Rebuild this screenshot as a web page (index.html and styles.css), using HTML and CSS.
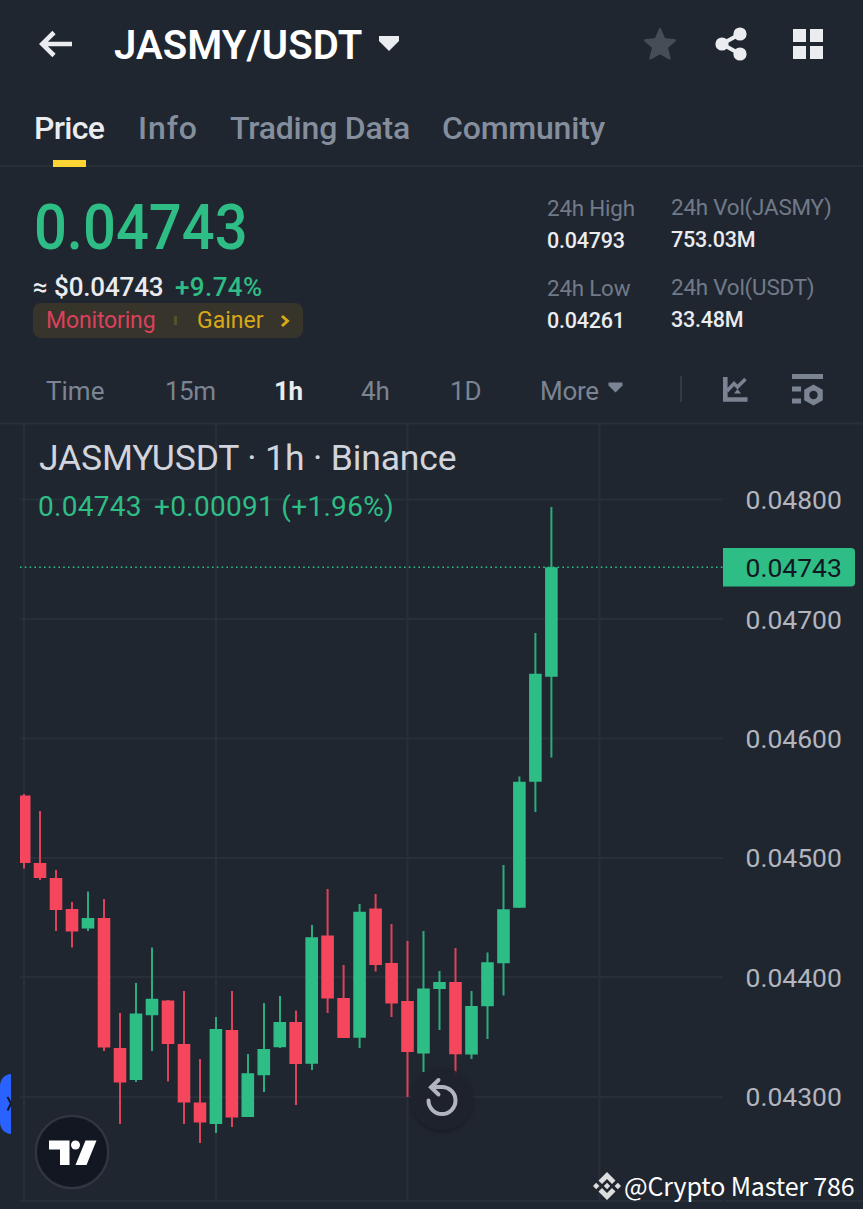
FILE: index.html
```html
<!DOCTYPE html>
<html lang="en">
<head>
<meta charset="utf-8">
<title>JASMY/USDT</title>
<link rel="stylesheet" href="styles.css">
</head>
<body>
<main class="app">
  <header class="topbar">
    <svg class="back" width="34" height="28" viewBox="0 0 34 28"><path d="M33 14H3M15 2.500L3.200 14 15 25.500" fill="none" stroke="#eaecef" stroke-width="4.600"/></svg>
    <h1 class="pair">JASMY/USDT</h1>
    <svg class="pair-caret" width="22" height="17" viewBox="0 0 22 17"><path d="M1 1H21V6L11 16 1 6Z" fill="#eaecef"/></svg>
    <div class="actions">
      <svg width="34" height="34" viewBox="0 0 34 34"><path d="M17 2L21.200 12 32 13.200 24 20.600 26.700 31.500 17 26.200 7.300 31.500 10 20.600 2 13.200 12.800 12Z" fill="#474d57" stroke="#474d57" stroke-width="2" stroke-linejoin="round"/></svg>
      <svg width="34" height="34" viewBox="0 0 34 34"><g fill="#eaecef"><circle cx="8" cy="17" r="6.600"/><circle cx="26" cy="7" r="6.600"/><circle cx="26" cy="27" r="6.600"/></g><path d="M26 7L8 17 26 27" fill="none" stroke="#eaecef" stroke-width="4"/></svg>
      <svg width="30" height="30" viewBox="0 0 30 30"><path d="M0 0H13V13H0ZM17 0H30V13H17ZM0 17H13V30H0ZM17 17H30V30H17Z" fill="#eaecef"/></svg>
    </div>
  </header>

  <nav class="tabs">
    <span class="tab active t-price">Price</span>
    <span class="tab t-info">Info</span>
    <span class="tab t-data">Trading Data</span>
    <span class="tab t-comm">Community</span>
  </nav>

  <section class="summary">
    <div class="quote">
      <div class="last">0.04743</div>
      <div class="fiat"><span class="usd">≈ $0.04743</span><span class="change">+9.74%</span></div>
      <div class="tags"><span class="monitoring">Monitoring</span><i class="tag-sep"></i><span class="gainer">Gainer</span><svg width="11" height="14" viewBox="0 0 11 14"><path d="M2 2L7.500 7 2 12" fill="none" stroke="#d9a816" stroke-width="3"/></svg></div>
    </div>
    <div class="stats left">
      <div class="stat"><span class="label">24h High</span><span class="value">0.04793</span></div>
      <div class="stat"><span class="label">24h Low</span><span class="value">0.04261</span></div>
    </div>
    <div class="stats right">
      <div class="stat"><span class="label">24h Vol(JASMY)</span><span class="value">753.03M</span></div>
      <div class="stat"><span class="label">24h Vol(USDT)</span><span class="value">33.48M</span></div>
    </div>
  </section>

  <div class="intervals">
    <span class="iv time">Time</span>
    <span class="iv m15">15m</span>
    <span class="iv h1 selected">1h</span>
    <span class="iv h4">4h</span>
    <span class="iv d1">1D</span>
    <span class="iv more">More</span>
    <svg class="more-caret" width="15" height="11" viewBox="0 0 15 11"><path d="M.5 .5H14.500V3.500L7.500 10.500 .5 3.500Z" fill="#7b8492"/></svg>
    <i class="rule"></i>
    <svg class="ind" width="25" height="25" viewBox="0 0 25 25"><path d="M2.300 0V22.500H24.500" fill="none" stroke="#7b8492" stroke-width="4.600"/><path d="M4 14L11 6.500 14.500 10 22.500 2" fill="none" stroke="#7b8492" stroke-width="3.500"/><path d="M14.500 12L18 16.500H11Z" fill="#7b8492"/></svg>
    <svg class="settings" width="31" height="32" viewBox="0 0 31 32"><path d="M0 0H31V5H0ZM0 12.500H9V17.500H0ZM0 24.500H9V29.500H0Z" fill="#7b8492"/><path fill-rule="evenodd" d="M21.500 10.500L30.800 15.800V26.200L21.500 31.500 12.200 26.200V15.800ZM21.500 16.800A4.200 4.200 0 1 0 21.500 25.200 4.200 4.200 0 1 0 21.500 16.800Z" fill="#7b8492"/></svg>
  </div>

  <section class="chart">
    <svg class="plot" width="863" height="787" viewBox="0 422 863 787">
      <path class="grid" d="M0 423.500H863M24 423V1201M216 423V1201M407.500 423V1201M599.500 423V1201M20 499.500H723M20 619H723M20 738.500H723M20 858H723M20 977H723M20 1097H723M20 1201H723M725 1201H863"/>
      <path class="wick down" d="M24 794V868.500M40 811V880M56 870V931M72 902V947.500M104 899V1051M120 1013V1124M168 1000V1081.500M184 991V1124M200 1059V1143M232 991V1127M296 1010.500V1105M327.600 889V1013M343.600 965V1038M375.600 894V971.500M391.500 924V1017M407.500 941V1097M455.500 948V1077"/>
      <path class="wick up" d="M88 891.500V931M136 983V1082M152 947.500V1051M216 1017V1133M248 1054V1117M264 1003V1092M280 996V1048M312 925V1070M359.600 904V1048M423.500 931V1072M439.500 971V1030M471.500 991V1059M487.500 952.500V1039M503.500 865V995.500M519.400 776.500V908M535.400 633V812M551.400 507V757.500"/>
      <path class="body down" d="M20 795.500H30.500V863H20ZM33.700 863h12.600v15h-12.600ZM49.700 878h12.600v32h-12.600ZM65.700 909h12.600v22.500h-12.600ZM97.700 918h12.600v129.500h-12.600ZM113.700 1048h12.600v34.500h-12.600ZM161.700 1000.500h12.600v43.500h-12.600ZM177.700 1044h12.600v58.500h-12.600ZM193.700 1102.500h12.600v20h-12.600ZM225.600 1030h12.600v87.500h-12.600ZM289.400 1022h12.600v42h-12.600ZM321.300 935.500h12.600v63h-12.600ZM337.300 998h12.600v40h-12.600ZM369.300 908.500h12.600v56.500h-12.600ZM385.300 963h12.600v40.500h-12.600ZM401.200 1001h12.600v51h-12.600ZM449.200 982h12.600v72.300h-12.600Z"/>
      <path class="body up" d="M81.700 918h12.600v10.500h-12.600ZM129.700 1013.500h12.600v66.500h-12.600ZM145.700 998.700h12.600v16.500h-12.600ZM209.600 1029h12.600v95h-12.600ZM241.500 1073.300h12.600v43.700h-12.600ZM257.500 1049h12.600v26.200h-12.600ZM273.500 1022h12.600v25.300h-12.600ZM305.400 937.300h12.600v126.500h-12.600ZM353.300 911.700h12.600v126h-12.600ZM417.200 988.500h12.600v65h-12.600ZM433.200 982h12.600v7h-12.600ZM465.200 1006h12.600v48.500h-12.600ZM481.200 962.300h12.600v44h-12.600ZM497.200 909.300h12.600v54h-12.600ZM513.100 781.700h12.600v126h-12.600ZM529.100 673.700h12.600v108h-12.600ZM545.100 567.300h12.600v109.500h-12.600Z"/>
      <path class="last-line" d="M20 567.200H723"/>
      <path d="M723 548H851a4 4 0 0 1 4 4V582.500a4 4 0 0 1-4 4H723Z" fill="#2ebd85"/>
      <g class="axis">
        <text x="745.500" y="508.600">0.04800</text>
        <text x="745.500" y="576.600" class="current">0.04743</text>
        <text x="745.500" y="628.500">0.04700</text>
        <text x="745.500" y="748.400">0.04600</text>
        <text x="745.500" y="867.400">0.04500</text>
        <text x="745.500" y="986.800">0.04400</text>
        <text x="745.500" y="1106.400">0.04300</text>
      </g>
    </svg>
    <div class="legend">
      <div class="legend-title">JASMYUSDT · 1h · Binance</div>
      <div class="legend-values"><span class="lv-price">0.04743</span><span class="lv-change">+0.00091 (+1.96%)</span></div>
    </div>
    <svg class="drawer" width="11" height="60" viewBox="0 0 11 60"><path d="M11 0C5 0 0 5 0 12V48C0 55 5 60 11 60Z" fill="#2962ff"/><path d="M7.500 23L11 29.500 7.500 36.500" fill="none" stroke="#131722" stroke-width="2"/></svg>
    <svg class="tv" width="76" height="76" viewBox="0 0 76 76"><circle cx="38" cy="38" r="36.200" fill="#131722" stroke="#323642" stroke-width="2.300"/><g fill="#fff"><path d="M15 26.500H35.500V51H26V35.500H15Z"/><circle cx="41.500" cy="31" r="4.500"/><path d="M51.500 26.500H62.500L52.500 51H41.500Z"/></g></svg>
    <div class="reset"><svg width="34" height="40" viewBox="0 0 34 40"><path d="M3.500 23.500A13.500 13.500 0 1 0 17 10H7M13.500 3L6 10.200 13.500 17.500" fill="none" stroke="#b2b5be" stroke-width="4" stroke-linecap="round"/></svg></div>
    <div class="watermark">
      <svg width="28" height="28" viewBox="0 0 28 28"><path d="M14 0L22.500 8.500 19 12 14 7 9 12 5.500 8.500ZM14 28L22.500 19.500 19 16 14 21 9 16 5.500 19.500ZM14 10.800L17.200 14 14 17.200 10.800 14ZM3.200 10.800L6.400 14 3.200 17.200 0 14ZM24.800 10.800L28 14 24.800 17.200 21.600 14Z" fill="#ddd"/></svg>
      <span>@Crypto Master 786</span>
    </div>
  </section>
</main>
</body>
</html>
```
FILE: styles.css
```css
* { box-sizing: border-box; }
body { margin: 0; background: #202630; font-family: Roboto, "Liberation Sans", sans-serif; }
.app { width: 863px; height: 1209px; overflow: hidden; color: #eaecef; }
svg { display: block; flex: none; }
span, .last, .legend-title { white-space: nowrap; }

.topbar { height: 87px; padding-left: 39px; display: flex; align-items: center; }
.back { margin-right: 41px; }
.pair { margin: 5px 0 0; width: 264px; font-size: 40px; line-height: 48px; font-weight: 600; letter-spacing: 0.1px; color: #fff; white-space: nowrap; }
.actions { display: flex; align-items: center; gap: 37px; margin-left: auto; padding-right: 40px; }
.actions svg:last-child { margin-left: 8px; }

.tabs { height: 80px; display: flex; padding: 21px 0 0 34px; border-bottom: 2px solid #282e38; }
.tab { position: relative; line-height: 41px; height: 59px; font-size: 32px; font-weight: 500; letter-spacing: -0.2px; color: #848e9c; }
.tab.active { color: #eaecef; letter-spacing: -0.7px; }
.tab.active::after { content: ""; position: absolute; left: 19px; bottom: 0; width: 33px; height: 7px; background: #fcd535; }
.t-price { width: 104px; }
.t-info { width: 92px; letter-spacing: 0.9px; }
.t-data { width: 212px; }

.summary { height: 191px; display: flex; padding: 28px 0 0 33px; }
.quote { width: 514px; }
.last { height: 64px; line-height: 66px; padding-left: 1px; font-size: 63px; font-weight: 500; color: #2ebd85; transform: scaleX(0.92); transform-origin: 0 0; }
.fiat { display: flex; height: 44px; padding-top: 12px; line-height: 32px; font-size: 26px; font-weight: 500; }
.usd { width: 142px; letter-spacing: -0.15px; }
.change { color: #2ebd85; letter-spacing: 0.4px; }
.tags { width: 270px; height: 35px; display: flex; align-items: center; border-radius: 8px; background: #37342c; padding-left: 13px; font-size: 23px; }
.monitoring { width: 128px; color: #dc405b; letter-spacing: -0.15px; }
.tag-sep { width: 3px; height: 9px; margin-right: 20px; background: #58502d; }
.gainer { width: 83px; color: #d9a816; }
.stats.left { width: 124px; padding-top: 1px; }
.stat { height: 80px; display: flex; flex-direction: column; margin-top: -2px; margin-bottom: 2px; font-size: 22.400px; line-height: 31px; }
.label { height: 31px; line-height: 29px; color: #717a88; letter-spacing: -0.2px; }
.value { font-weight: 500; font-size: 21.500px; letter-spacing: -0.2px; }

.intervals { height: 64px; padding: 0 0 0 46px; display: flex; align-items: center; font-size: 26px; color: #7b8492; }
.time { width: 119px; }
.m15 { width: 109px; letter-spacing: -0.5px; }
.h1 { width: 87px; font-weight: 700; color: #eaecef; letter-spacing: -0.5px; }
.h4 { width: 89px; }
.d1 { width: 90px; }
.more { width: 69px; letter-spacing: -0.3px; }
.more-caret { margin: -5px 1px 0 -1px; }
.iv { padding-top: 1px; }
.rule { width: 2px; height: 26px; margin: -3px 0 0 56px; background: #343a44; }
.ind { margin: -2px 0 0 41px; }
.settings { margin: -1px 0 0 44px; }

.chart { position: relative; height: 787px; }
.grid { fill: none; stroke: #292f39; stroke-width: 2; }
.wick { fill: none; stroke-width: 2; }
.wick.down { stroke: #dc4359; }
.wick.up { stroke: #2cac7c; }
.body.down { fill: #f6465d; }
.body.up { fill: #2ebd85; }
.last-line { fill: none; stroke: #2ebd85; stroke-width: 1.500px; stroke-dasharray: 1.600 3.200; }
.axis { font-size: 26.500px; fill: #b2b5be; }
.axis .current { fill: #131722; }
.legend { position: absolute; left: 38px; top: 14px; }
.legend-title { height: 46px; line-height: 45px; padding-left: 1px; font-size: 35.500px; letter-spacing: -0.15px; color: #d1d4dc; }
.legend-values { display: flex; height: 50px; line-height: 50px; font-size: 28px; letter-spacing: 0.3px; color: #2ebd85; }
.lv-price { width: 116px; }
.drawer { position: absolute; left: 0; top: 652px; }
.tv { position: absolute; left: 34px; top: 692px; }
.reset { position: absolute; left: 411px; top: 646px; width: 62px; height: 62px; border-radius: 50%; background: rgb(30 34 45 / 92%); box-shadow: 0 2px 4px rgb(0 0 0 / 30%); padding: 9px 0 0 14px; }
.watermark { position: absolute; left: 593px; top: 748px; display: flex; align-items: center; gap: 3px; font-family: "Noto Sans CJK SC", "Noto Sans", sans-serif; font-size: 25px; line-height: 32px; color: #fff; }
.watermark span { margin-top: -1px; letter-spacing: -0.15px; }
```
